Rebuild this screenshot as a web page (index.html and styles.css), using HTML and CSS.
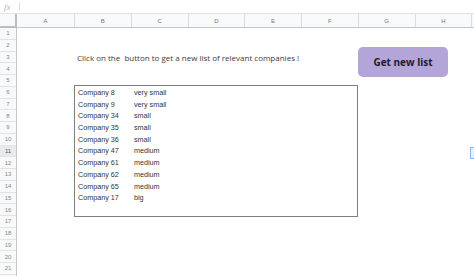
FILE: index.html
```html
<!DOCTYPE html>
<html lang="en">
<head>
    <meta charset="UTF-8">
    <title>Company list</title>
    <link rel="stylesheet" href="styles.css">
</head>
<body>

    <div class="formula">
        <span class="fx">fx</span>
        <span class="fx-sep"></span>
    </div>

    <div class="sheet">
        <div class="corner"></div>

        <div class="colheads">
            <div class="colhead">A</div>
            <div class="colhead">B</div>
            <div class="colhead">C</div>
            <div class="colhead">D</div>
            <div class="colhead">E</div>
            <div class="colhead">F</div>
            <div class="colhead">G</div>
            <div class="colhead">H</div>
        </div>

        <div class="rowheads">
            <div class="rowhead">1</div>
            <div class="rowhead">2</div>
            <div class="rowhead">3</div>
            <div class="rowhead">4</div>
            <div class="rowhead">5</div>
            <div class="rowhead">6</div>
            <div class="rowhead">7</div>
            <div class="rowhead">8</div>
            <div class="rowhead">9</div>
            <div class="rowhead">10</div>
            <div class="rowhead active">11</div>
            <div class="rowhead">12</div>
            <div class="rowhead">13</div>
            <div class="rowhead">14</div>
            <div class="rowhead">15</div>
            <div class="rowhead">16</div>
            <div class="rowhead">17</div>
            <div class="rowhead">18</div>
            <div class="rowhead">19</div>
            <div class="rowhead">20</div>
            <div class="rowhead">21</div>
        </div>

        <div class="cells">
            <div class="note">Click on the&nbsp; button to get a new list of relevant companies !</div>

            <button class="get-btn">Get new list</button>

            <div class="list-box">
                <div class="list-row"><span class="name">Company 8</span><span>very small</span></div>
                <div class="list-row"><span class="name">Company 9</span><span>very small</span></div>
                <div class="list-row"><span class="name">Company 34</span><span>small</span></div>
                <div class="list-row"><span class="name">Company 35</span><span>small</span></div>
                <div class="list-row"><span class="name">Company 36</span><span>small</span></div>
                <div class="list-row"><span class="name">Company 47</span><span>medium</span></div>
                <div class="list-row"><span class="name">Company 61</span><span>medium</span></div>
                <div class="list-row"><span class="name">Company 62</span><span>medium</span></div>
                <div class="list-row"><span class="name">Company 65</span><span>medium</span></div>
                <div class="list-row"><span class="name">Company 17</span><span>big</span></div>
            </div>

            <div class="side-tab"></div>
        </div>
    </div>

</body>
</html>
```

FILE: styles.css
```css
body {
    margin: 0;
    width: 474px;
    height: 276px;
    overflow: hidden;
    background-color: #fff;
    font-family: "Liberation Sans", Arial, sans-serif;
}

.formula {
    height: 14px;
    display: flex;
    align-items: center;
    gap: 8px;
    padding-left: 4px;
    box-sizing: border-box;
    border-bottom: 1px solid #e2e3e3;
}
.fx {
    font-family: "Liberation Serif", serif;
    font-style: italic;
    font-size: 9px;
    color: #b0b0b0;
}
.fx-sep {
    width: 1px;
    height: 9px;
    background-color: #e0e0e0;
}

.sheet {
    display: grid;
    grid-template-columns: 17px 1fr;
    grid-template-rows: 14px 1fr;
    height: 262px;
}

.corner {
    background-color: #f8f9fa;
    border-right: 2px solid #bdbdbd;
    border-bottom: 2px solid #bdbdbd;
    box-sizing: border-box;
}

.colheads {
    display: flex;
    background-color: #f8f9fa;
    border-bottom: 1px solid #c8c8c8;
    box-sizing: border-box;
}
.colhead {
    width: 56.75px;
    flex-shrink: 0;
    display: flex;
    align-items: center;
    justify-content: center;
    font-size: 6px;
    color: #777;
    border-right: 1px solid #dadce0;
    box-sizing: border-box;
}
.colhead:first-child {
    width: 58px;
}

.rowheads {
    display: flex;
    flex-direction: column;
    background-color: #f8f9fa;
    border-right: 1px solid #c8c8c8;
    box-sizing: border-box;
}
.rowhead {
    height: 11.75px;
    flex-shrink: 0;
    display: flex;
    align-items: center;
    justify-content: center;
    font-size: 6px;
    color: #888;
    border-bottom: 1px solid #e2e3e3;
    box-sizing: border-box;
}
.rowhead.active {
    background-color: #e8eaed;
    color: #555;
}

.cells {
    position: relative;
}

.note {
    margin: 24px 0 0 60px;
    height: 12px;
    line-height: 12px;
    font-family: "Open Sans", sans-serif;
    font-size: 8px;
    color: #3c3c3c;
    white-space: nowrap;
}

.get-btn {
    position: absolute;
    left: 341px;
    top: 19px;
    width: 90px;
    height: 30px;
    border: none;
    border-radius: 5px;
    background-color: #b3a5d8;
    color: #1f1b2e;
    font-family: "Open Sans", sans-serif;
    font-weight: 700;
    font-size: 10px;
    padding: 0;
}

.list-box {
    position: absolute;
    left: 57px;
    top: 57px;
    width: 284px;
    height: 132px;
    box-sizing: border-box;
    border: 1.5px solid #7f7f7f;
    padding: 1px 0 0 3px;
    font-size: 7.2px;
    color: #333;
}
.list-row {
    height: 11.7px;
    line-height: 11.7px;
    display: flex;
}
.list-row .name {
    width: 56px;
}

.side-tab {
    position: absolute;
    right: 0;
    top: 119px;
    width: 3px;
    height: 10px;
    border: 1px solid #8ab4f8;
    border-right: none;
    background-color: #e8f0fe;
}
```
